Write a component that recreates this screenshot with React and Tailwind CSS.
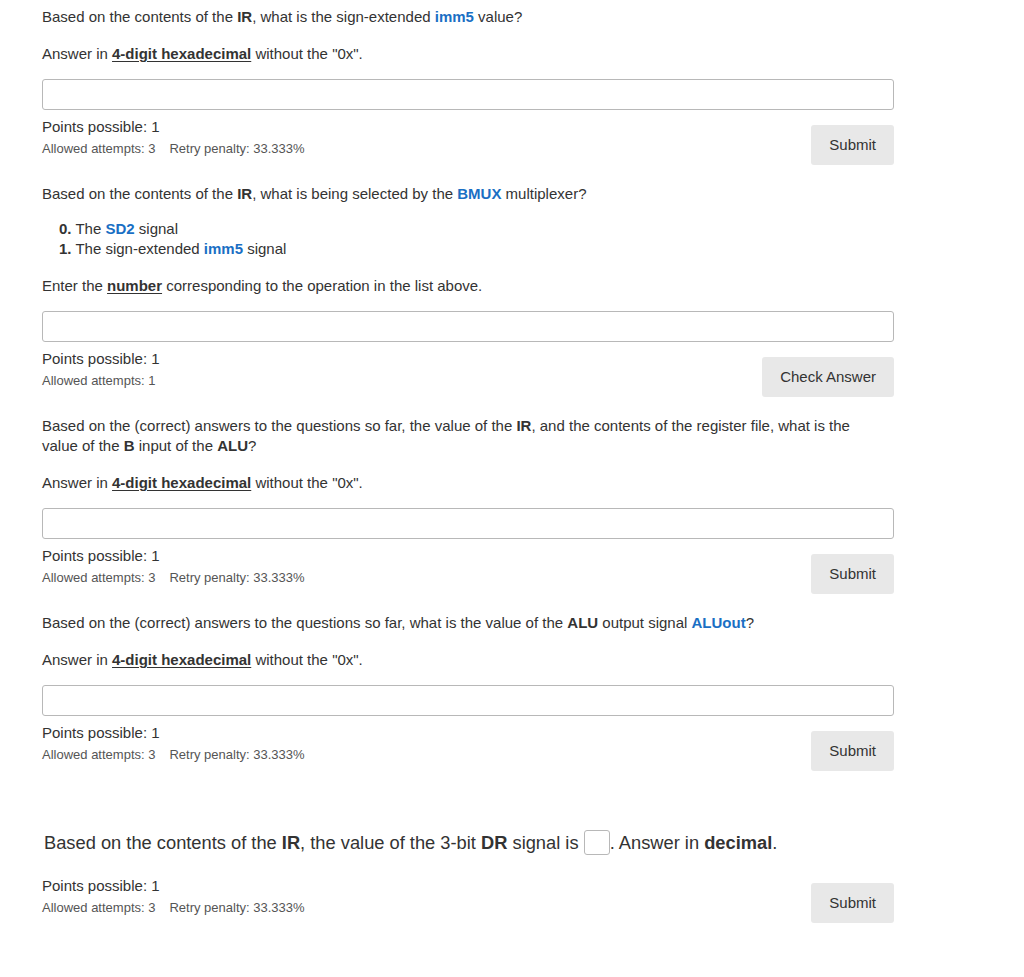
import React from 'react';

const Blue = ({ children }) => <b className="font-bold text-[#1a6fc4]">{children}</b>;
const B = ({ children }) => <b className="font-bold text-[#333]">{children}</b>;
const U = ({ children }) => <b className="font-bold underline underline-offset-2 text-[#333]">{children}</b>;

function Footer({ attempts, penalty = true, label = 'Submit', top = 'mt-[7px]', btnTop = 'mt-[8px]' }) {
  return (<div className={`${top} flex justify-between items-start`}>
      <div>
        <div className="text-[15px] leading-5 text-[#333]">Points possible: 1</div>
        <div className="mt-[4px] text-[13px] leading-4 text-[#555]">
          <span className={penalty ? 'mr-[14px]' : ''}>Allowed attempts: {attempts}</span>
          {penalty && <span>Retry penalty: 33.333%</span>}
        </div>
      </div>
      <button type="button" className={`${btnTop} h-10 px-[18px] rounded-[3px] bg-[#e8e8e8] text-[15px] text-[#333]`}>
        {label}
      </button>
    </div>);
}

function Input({ top = 'mt-[15px]' }) {
  return <input type="text" className={`${top} block w-full h-[31px] border border-[#b8b8b8] rounded-[3px] bg-white px-2`}/>;
}

const HexNote = () => (<p className="mt-[17px] leading-5">
    Answer in <U>4-digit hexadecimal</U> without the "0x".
  </p>);

export default function App() {
  return (<div className="min-h-[977px] bg-white" style={{ fontFamily: '"Liberation Sans", Arial, sans-serif' }}>
      <div className="ml-[42px] w-[852px] text-[15px] text-[#333]">
        {/* Q1 */}
        <p className="pt-[7px] leading-5">
          Based on the contents of the <B>IR</B>, what is the sign-extended <Blue>imm5</Blue> value?
        </p>
        <HexNote />
        <Input />
        <Footer attempts={3}/>

        {/* Q2 */}
        <p className="mt-[19px] leading-5">
          Based on the contents of the <B>IR</B>, what is being selected by the <Blue>BMUX</Blue> multiplexer?
        </p>
        <ol className="mt-[15px] pl-[17px] leading-5">
          <li><B>0.</B> The <Blue>SD2</Blue> signal</li>
          <li><B>1.</B> The sign-extended <Blue>imm5</Blue> signal</li>
        </ol>
        <p className="mt-[17px] leading-5">
          Enter the <U>number</U> corresponding to the operation in the list above.
        </p>
        <Input />
        <Footer attempts={1} penalty={false} label="Check Answer"/>

        {/* Q3 */}
        <p className="mt-[19px] leading-5 max-w-[840px]">
          Based on the (correct) answers to the questions so far, the value of the <B>IR</B>, and the contents of the register file, what is the value of the <B>B</B> input of the <B>ALU</B>?
        </p>
        <HexNote />
        <Input />
        <Footer attempts={3}/>

        {/* Q4 */}
        <p className="mt-[19px] leading-5">
          Based on the (correct) answers to the questions so far, what is the value of the <B>ALU</B> output signal <Blue>ALUout</Blue>?
        </p>
        <HexNote />
        <Input />
        <Footer attempts={3}/>

        {/* Q5 */}
        <p className="mt-[59px] pl-[2px] text-[18.3px] leading-[26px]">
          Based on the contents of the <B>IR</B>, the value of the 3-bit <B>DR</B> signal is{' '}
          <input type="text" className="inline-block align-middle w-[26px] h-[25px] border border-[#b8b8b8] rounded-[3px] bg-white -mt-[3px]"/>
          . Answer in <B>decimal</B>.
        </p>
        <Footer attempts={3} top="mt-[20px]" btnTop="mt-[7px]"/>
      </div>
    </div>);
}
